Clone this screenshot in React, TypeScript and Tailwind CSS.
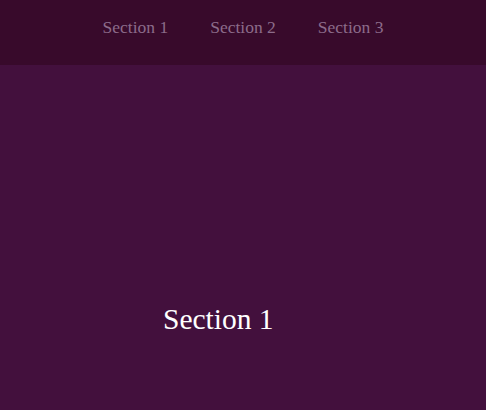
import React from 'react';

const sections = ['Section 1', 'Section 2', 'Section 3'];

export default function App() {
  return (
    <div className="min-h-screen w-full bg-[#43103d] font-['Liberation_Serif',serif]">
      <nav className="h-[65px] bg-[#380a2b] flex items-center justify-center gap-[42px] pb-[10px]">
        {sections.map((s) => (
          <a key={s} href="#" className="text-[17.5px] text-[#8c6c8a] leading-none">
            {s}
          </a>
        ))}
      </nav>
      <main className="pl-[163px] pt-[238px]">
        <h1 className="text-[29.5px] text-white leading-[33px]">Section 1</h1>
      </main>
    </div>
  );
}
